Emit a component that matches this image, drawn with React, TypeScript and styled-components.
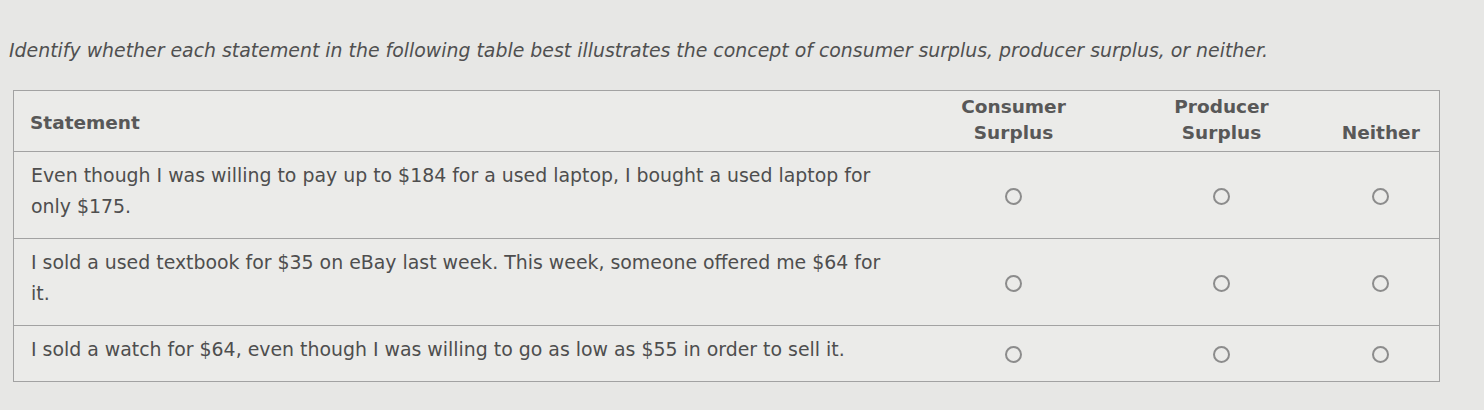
import React from 'react'
import styled, { createGlobalStyle } from 'styled-components'

const GlobalStyle = createGlobalStyle`
  html, body {
    margin: 0;
    background: #e7e7e5;
  }
  body {
    font-family: 'DejaVu Sans', Verdana, sans-serif;
    color: #545454;
  }
`

const columns = [
  { label: 'Consumer Surplus', width: 214 },
  { label: 'Producer Surplus', width: 202 },
  { label: 'Neither', width: 117 },
]

const statements = [
  'Even though I was willing to pay up to $184 for a used laptop, I bought a used laptop for only $175.',
  'I sold a used textbook for $35 on eBay last week. This week, someone offered me $64 for it.',
  'I sold a watch for $64, even though I was willing to go as low as $55 in order to sell it.',
]

export default function App() {
  return (
    <>
      <GlobalStyle />
      <Page>
        <Prompt>
          Identify whether each statement in the following table best illustrates the concept of
          consumer surplus, producer surplus, or neither.
        </Prompt>
        <Table>
          <colgroup>
            <col style={{ width: 893 }} />
            {columns.map((c) => (
              <col key={c.label} style={{ width: c.width }} />
            ))}
          </colgroup>
          <thead>
            <tr>
              <HeadCell $align="left">Statement</HeadCell>
              {columns.map((c) => (
                <HeadCell key={c.label} $align="center">
                  {c.label.split(' ').map((w, i) => (
                    <React.Fragment key={w}>
                      {i > 0 && <br />}
                      {w}
                    </React.Fragment>
                  ))}
                </HeadCell>
              ))}
            </tr>
          </thead>
          <tbody>
            {statements.map((s, row) => (
              <tr key={row}>
                <TextCell>{s}</TextCell>
                {columns.map((c) => (
                  <RadioCell key={c.label}>
                    <Radio />
                  </RadioCell>
                ))}
              </tr>
            ))}
          </tbody>
        </Table>
      </Page>
    </>
  )
}

const Page = styled.div`
  padding: 38px 45px 24px 13px;
`

const Prompt = styled.p`
  margin: 0 0 28px -4px;
  font-size: 18.9px;
  font-style: italic;
  line-height: 24px;
  color: #505050;
  white-space: nowrap;
`

const Table = styled.table`
  width: 1426px;
  table-layout: fixed;
  border-collapse: collapse;
  border: 1px solid #a2a2a2;
  background: #ebebe9;

  td,
  th {
    box-sizing: border-box;
  }
`

const HeadCell = styled.th<{ $align: 'left' | 'center' }>`
  text-align: ${({ $align }) => $align};
  vertical-align: bottom;
  font-size: 18.5px;
  font-weight: bold;
  line-height: 26px;
  color: #585858;
  padding: 3px 4px 5px;
  border-bottom: 1px solid #a2a2a2;

  &:first-child {
    padding: 4px 4px 0 16px;
    vertical-align: middle;
  }
`

const TextCell = styled.td`
  font-size: 18.9px;
  line-height: 31px;
  padding: 8px 20px 16px 17px;
  border-top: 1px solid #a2a2a2;
  color: #4e4e4e;
`

const RadioCell = styled.td`
  text-align: center;
  vertical-align: middle;
  border-top: 1px solid #a2a2a2;
`

const Radio = styled.span`
  display: inline-block;
  width: 13px;
  height: 13px;
  border: 2px solid #8c8c8c;
  border-radius: 50%;
  vertical-align: middle;
`
